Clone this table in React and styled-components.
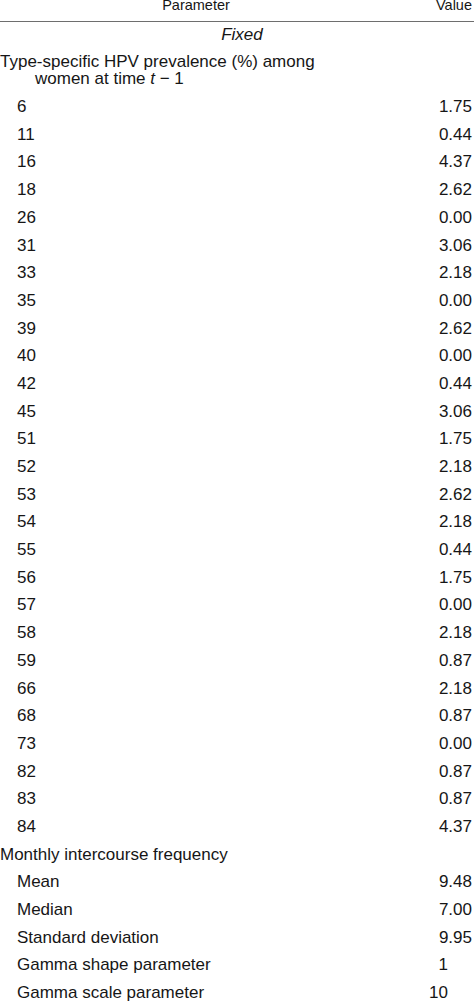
import React from 'react'
import styled, { createGlobalStyle } from 'styled-components'

const GlobalStyle = createGlobalStyle`
  body {
    margin: 0;
    background: #fff;
    color: #161616;
    font-family: 'Liberation Sans', Arial, sans-serif;
    overflow: hidden;
  }
`

const Table = styled.div`
  width: 474px;
`

const HeadRow = styled.div`
  display: flex;
  box-sizing: border-box;
  margin-top: -2px;
  height: 24px;
  border-bottom: 1px solid #6e6e6e;
  font-size: 14.5px;
  line-height: 14.5px;
`

const HeadParam = styled.div`
  width: 392px;
  text-align: center;
`

const HeadValue = styled.div`
  flex: 1;
  text-align: right;
  padding-right: 2px;
`

const Section = styled.div`
  font-size: 17px;
  line-height: 17px;
  font-style: italic;
  text-align: center;
  padding: 3.7px 0 7px 10px;
`

const Row = styled.div`
  display: flex;
  align-items: flex-start;
  font-size: 17px;
  line-height: 17px;
  padding: 3.7px 0 7px;
`

const Label = styled.div`
  box-sizing: border-box;
  max-width: 345px;
  padding-left: ${p => (p.$sub ? 17 : 35)}px;
  text-indent: ${p => (p.$sub ? 0 : -35)}px;
`

const Value = styled.div`
  flex: 1;
  text-align: right;
  padding-right: ${p => (p.$int ? 26 : 2)}px;
`

const hpv = [
  ['6', '1.75'], ['11', '0.44'], ['16', '4.37'], ['18', '2.62'], ['26', '0.00'],
  ['31', '3.06'], ['33', '2.18'], ['35', '0.00'], ['39', '2.62'], ['40', '0.00'],
  ['42', '0.44'], ['45', '3.06'], ['51', '1.75'], ['52', '2.18'], ['53', '2.62'],
  ['54', '2.18'], ['55', '0.44'], ['56', '1.75'], ['57', '0.00'], ['58', '2.18'],
  ['59', '0.87'], ['66', '2.18'], ['68', '0.87'], ['73', '0.00'], ['82', '0.87'],
  ['83', '0.87'], ['84', '4.37'],
]

const freq = [
  ['Mean', '9.48'],
  ['Median', '7.00'],
  ['Standard deviation', '9.95'],
  ['Gamma shape parameter', '1'],
  ['Gamma scale parameter', '10'],
]

const SubRow = ({ label, value }) => (
  <Row>
    <Label $sub>{label}</Label>
    <Value $int={!value.includes('.')}>{value}</Value>
  </Row>
)

export default function App() {
  return (
    <Table>
      <GlobalStyle />
      <HeadRow>
        <HeadParam>Parameter</HeadParam>
        <HeadValue>Value</HeadValue>
      </HeadRow>
      <Section>Fixed</Section>
      <Row>
        <Label>
          Type-specific HPV prevalence (%) among women at time <i>t</i> − 1
        </Label>
      </Row>
      {hpv.map(([l, v]) => <SubRow key={l} label={l} value={v} />)}
      <Row>
        <Label>Monthly intercourse frequency</Label>
      </Row>
      {freq.map(([l, v]) => <SubRow key={l} label={l} value={v} />)}
    </Table>
  )
}
